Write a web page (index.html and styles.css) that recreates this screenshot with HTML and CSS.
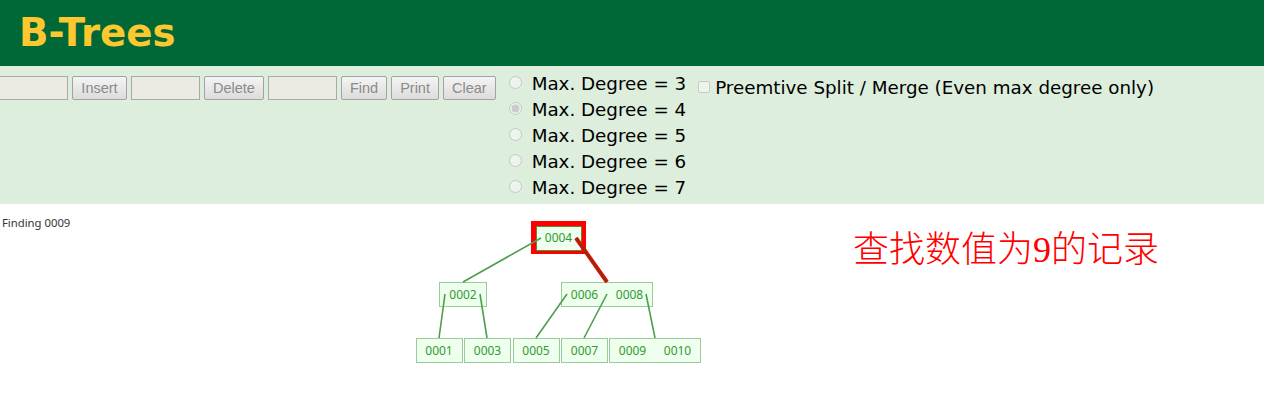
FILE: index.html
```html
<!DOCTYPE html>
<html lang="en">
<head>
<meta charset="UTF-8">
<meta name="viewport" content="width=device-width, initial-scale=1.0">
<title>B-Trees</title>
<link rel="stylesheet" href="styles.css">
</head>
<body>
<header class="header">
    <h1>B-Trees</h1>
</header>
<div class="controls">
    <div class="tools">
        <input class="field" type="text" disabled>
        <button class="insert" disabled>Insert</button>
        <input class="field" type="text" disabled>
        <button disabled>Delete</button>
        <input class="field" type="text" disabled>
        <button disabled>Find</button>
        <button disabled>Print</button>
        <button disabled>Clear</button>
    </div>
    <div class="degrees">
        <label class="degree"><input type="radio" name="degree" disabled>Max. Degree = 3</label>
        <label class="degree"><input type="radio" name="degree" checked disabled>Max. Degree = 4</label>
        <label class="degree"><input type="radio" name="degree" disabled>Max. Degree = 5</label>
        <label class="degree"><input type="radio" name="degree" disabled>Max. Degree = 6</label>
        <label class="degree"><input type="radio" name="degree" disabled>Max. Degree = 7</label>
    </div>
    <label class="preemptive"><input type="checkbox" disabled>Preemtive Split / Merge (Even max degree only)</label>
</div>
<main class="canvas">
    <svg class="tree" width="1264" height="202" viewBox="0 204 1264 202">
        <rect class="node" x="416.5" y="338.5" width="46" height="24"/>
        <rect class="node" x="464.5" y="338.5" width="46" height="24"/>
        <rect class="node" x="513.5" y="338.5" width="46" height="24"/>
        <rect class="node" x="561.5" y="338.5" width="46" height="24"/>
        <rect class="node" x="609.5" y="338.5" width="91" height="24"/>
        <rect class="node" x="439.5" y="282.5" width="47" height="24"/>
        <rect class="node" x="561.5" y="282.5" width="91" height="24"/>
        <rect class="found" x="533.5" y="223.5" width="50" height="28"/>
        <rect class="node node-found" x="536.5" y="226.5" width="45" height="24"/>

        <line class="edge" x1="541" y1="238" x2="463" y2="282"/>
        <line class="edge" x1="445" y1="294" x2="439" y2="338"/>
        <line class="edge" x1="480" y1="294" x2="487" y2="338"/>
        <line class="edge" x1="567" y1="294" x2="536" y2="338"/>
        <line class="edge" x1="607" y1="294" x2="584" y2="338"/>
        <line class="edge" x1="646" y1="294" x2="655" y2="338"/>
        <line class="edge-found" x1="576" y1="238" x2="607" y2="282"/>
        <line class="edge-dark" x1="576" y1="238" x2="607" y2="282"/>

        <text class="label" x="558.5" y="242">0004</text>
        <text class="label" x="463" y="298.5">0002</text>
        <text class="label" x="584.5" y="298.5">0006</text>
        <text class="label" x="629.5" y="298.5">0008</text>
        <text class="label" x="439" y="355">0001</text>
        <text class="label" x="487.5" y="355">0003</text>
        <text class="label" x="536" y="355">0005</text>
        <text class="label" x="584.5" y="355">0007</text>
        <text class="label" x="632.5" y="355">0009</text>
        <text class="label" x="677.5" y="355">0010</text>
    </svg>
    <p class="status">Finding 0009</p>
    <p class="note">查找数值为<span class="digit">9</span>的记录</p>
</main>
</body>
</html>
```

FILE: styles.css
```css
html, body {
    margin: 0;
    padding: 0;
}

body {
    width: 1264px;
    height: 406px;
    overflow: hidden;
    background-color: #fff;
    font-family: "DejaVu Sans", sans-serif;
}

.header {
    box-sizing: border-box;
    height: 66px;
    background-color: #006837;
    display: flex;
    align-items: center;
    padding-left: 19px;
    padding-bottom: 2px;
}

.header h1 {
    margin: 0;
    font-size: 38.7px;
    font-weight: bold;
    color: #fdc82f;
}

.controls {
    height: 138px;
    background-color: #ddeedd;
    display: flex;
    align-items: flex-start;
    overflow: hidden;
}

.tools {
    display: flex;
    gap: 4px;
    margin-top: 10px;
    margin-left: -2px;
}

.field {
    box-sizing: border-box;
    width: 69px;
    height: 24px;
    margin: 0;
    background-color: #ebebe4;
    border: 1px solid #a9a9a9;
}

.field:first-child {
    width: 70px;
}

button {
    box-sizing: border-box;
    height: 24px;
    margin: 0;
    padding: 0 8px;
    font-family: "Liberation Sans", sans-serif;
    font-size: 14.5px;
    color: #8b8b8b;
    background: linear-gradient(#f4f4f4, #dcdcdc);
    border: 1px solid #a3a3a3;
    border-radius: 2px;
}

.insert {
    width: 55px;
}

.degrees {
    display: flex;
    flex-direction: column;
    margin-left: 13px;
    margin-top: 4px;
}

.degree {
    display: flex;
    align-items: center;
    height: 26px;
    font-size: 18.3px;
    color: #000;
}

.degree input {
    margin: 0 10px 2px 0;
    width: 13px;
    height: 13px;
    flex: none;
}

.preemptive {
    display: flex;
    align-items: center;
    height: 26px;
    margin-top: 8px;
    margin-left: 12px;
    font-size: 18.3px;
    color: #000;
}

.preemptive input {
    margin: 0 5px 0 0;
    width: 12px;
    height: 12px;
}

.canvas {
    position: relative;
    height: 202px;
}

.tree {
    display: block;
}

.node {
    fill: #eeffee;
    stroke: #99cc99;
    stroke-width: 1;
}

.node-found {
    stroke: #5c8a3c;
}

.found {
    fill: none;
    stroke: #ff0000;
    stroke-width: 5;
}

.edge {
    stroke: #4d9e4d;
    stroke-width: 1.6;
}

.edge-found {
    stroke: #ff0000;
    stroke-width: 4;
}

.edge-dark {
    stroke: #7a3a10;
    stroke-width: 2;
}

.label {
    font-family: "Noto Sans", sans-serif;
    font-size: 12px;
    fill: #339933;
    text-anchor: middle;
}

.status {
    position: absolute;
    left: 2px;
    top: 11px;
    margin: 0;
    font-family: "Noto Sans", sans-serif;
    font-size: 11.3px;
    color: #333;
}

.note {
    position: absolute;
    left: 853px;
    top: 20px;
    margin: 0;
    font-family: "Noto Sans CJK SC", sans-serif;
    font-size: 36px;
    line-height: 44px;
    font-weight: 300;
    color: #ff0000;
}

.digit {
    font-family: "Liberation Serif", serif;
}
```
